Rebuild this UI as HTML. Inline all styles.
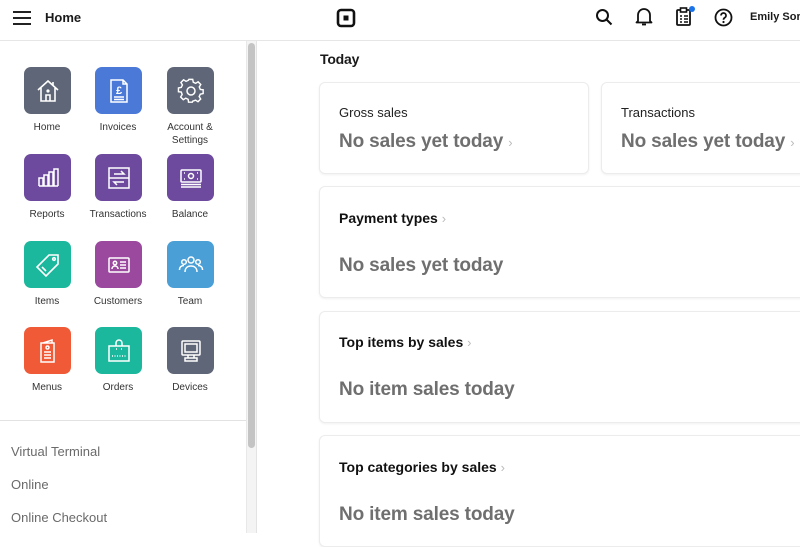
<!DOCTYPE html>
<html><head><meta charset="utf-8"><style>
*{margin:0;padding:0;box-sizing:border-box}
body{width:800px;height:533px;overflow:hidden;background:#fff;font-family:"Liberation Sans",sans-serif;position:relative;color:#1a1a1a}
.abs{position:absolute}
.hdr{left:0;top:0;width:800px;height:41px;border-bottom:1px solid #e6e6e6;background:#fff}
.tile{position:absolute;width:47px;height:47px;border-radius:7px;display:flex;align-items:center;justify-content:center}
.lbl{position:absolute;width:80px;text-align:center;font-size:10px;color:#333;line-height:13px}
.side{font-size:13px;color:#6a6a6a;left:11px}
.card{position:absolute;border:1px solid #ececec;border-radius:6px;box-shadow:0 1px 2px rgba(0,0,0,.06);background:#fff}
.big{position:absolute;font-size:19px;font-weight:bold;color:#6f6f6f;letter-spacing:-0.15px;white-space:nowrap}
.sm{position:absolute;font-size:13px;color:#222;white-space:nowrap}
.tt{position:absolute;font-size:14px;font-weight:bold;color:#111;letter-spacing:0;white-space:nowrap}
.ch{color:#bbb;font-weight:normal;font-size:13px}
svg{display:block}
</style></head><body>
<div class="abs hdr"></div>
<svg class="abs" style="left:12px;top:10px" width="20" height="16" viewBox="0 0 20 16"><path d="M1 2h18M1 8h18M1 14h18" stroke="#222" stroke-width="2"/></svg>
<div class="abs" style="left:45px;top:10px;font-size:13px;font-weight:bold">Home</div>
<svg class="abs" style="left:336px;top:8px" width="20" height="20" viewBox="0 0 20 20"><rect x="2" y="2" width="16" height="16" rx="3" fill="none" stroke="#111" stroke-width="2.6"/><rect x="7.5" y="7.5" width="5" height="5" fill="#111"/></svg>
<svg class="abs" style="left:595px;top:8px" width="18" height="18" viewBox="0 0 18 18"><circle cx="7.5" cy="7.5" r="5.5" fill="none" stroke="#111" stroke-width="2"/><path d="M11.5 11.5l5 5" stroke="#111" stroke-width="2"/></svg>
<svg class="abs" style="left:635px;top:7px" width="18" height="20" viewBox="0 0 18 20"><path d="M3 14V8a6 6 0 0112 0v6l1.5 1.5h-15z" fill="none" stroke="#111" stroke-width="1.8" stroke-linejoin="round"/><path d="M7 17.5h4" stroke="#111" stroke-width="1.8"/></svg>
<svg class="abs" style="left:675px;top:6px" width="20" height="22" viewBox="0 0 20 22"><rect x="2" y="4" width="13" height="15" rx="1" fill="none" stroke="#111" stroke-width="1.8"/><rect x="5.5" y="2" width="6" height="4" fill="#fff" stroke="#111" stroke-width="1.6"/><path d="M5 10h2M9 10h4M5 13h2M9 13h4M5 16h2M9 16h4" stroke="#111" stroke-width="1.4"/><circle cx="17" cy="3" r="3" fill="#1a73e8"/></svg>
<svg class="abs" style="left:714px;top:8px" width="19" height="19" viewBox="0 0 19 19"><circle cx="9.5" cy="9.5" r="8" fill="none" stroke="#111" stroke-width="1.8"/><path d="M7 7.5a2.5 2.5 0 114 2c-1 .6-1.5 1-1.5 2.2" fill="none" stroke="#111" stroke-width="1.7"/><circle cx="9.5" cy="14" r="1.1" fill="#111"/></svg>
<div class="abs" style="left:750px;top:11px;font-size:11px;font-weight:bold;white-space:nowrap">Emily Sorensen</div>

<div class="abs" style="left:246px;top:41px;width:11px;height:492px;background:#f4f4f4;border-left:1px solid #e8e8e8;border-right:1px solid #e3e3e3"></div>
<div class="abs" style="left:248px;top:43px;width:7px;height:405px;background:#c4c4c4;border-radius:4px"></div>
<div class="abs" style="left:0;top:420px;width:246px;height:1px;background:#e2e2e2"></div>

<div class="tile" style="left:24px;top:67px;background:#5e6677"><svg width="28" height="28" viewBox="0 0 28 28" fill="none" stroke="#fff" stroke-width="1.6"><path d="M4 13L14 4l10 9M7 11v13h14V11M12 24v-6h4v6M19 5v4"/><circle cx="14" cy="14" r=".8" fill="#fff"/></svg></div>
<div class="tile" style="left:95px;top:67px;background:#4a79d8"><svg width="28" height="28" viewBox="0 0 28 28" fill="none" stroke="#fff" stroke-width="1.5"><path d="M6 3h12l4 4v18H6z M18 3v4h4"/><text x="14" y="17" font-size="11" font-family="Liberation Sans" fill="#fff" stroke="none" text-anchor="middle" font-weight="bold">£</text><path d="M9 20h10M9 22.5h10"/></svg></div>
<div class="tile" style="left:167px;top:67px;background:#5e6677"><svg width="28" height="28" viewBox="0 0 28 28" fill="none" stroke="#fff" stroke-width="1.5"><circle cx="14" cy="14" r="4"/><path d="M12 3h4l.6 3 2.5 1.2 2.6-1.6 2.8 2.8-1.6 2.6L24 13.6l3 .4v4l-3 .6-1.2 2.5 1.6 2.6-2.8 2.8-2.6-1.6L16 26l-.4 1h-4l-.4-3-2.5-1.2-2.6 1.6-2.8-2.8 1.6-2.6L4 16.4 1 16v-4l3-.6 1.2-2.5-1.600-2.6 2.8-2.8 2.6 1.6L11.4 4z" transform="translate(0.5 -0.5) scale(.95)"/></svg></div>

<div class="tile" style="left:24px;top:154px;background:#6d4a9e"><svg width="28" height="28" viewBox="0 0 28 28" fill="none" stroke="#fff" stroke-width="1.5"><path d="M5 22V14h4v8M10 22V11h4v11M15 22V8h4v14M20 22V5h4v17M5 22h19"/></svg></div>
<div class="tile" style="left:95px;top:154px;background:#6d4a9e"><svg width="28" height="28" viewBox="0 0 28 28" fill="none" stroke="#fff" stroke-width="1.5"><rect x="4" y="4" width="20" height="20"/><path d="M4 14h20M9 10h10l-3-3M19 18H9l3 3"/></svg></div>
<div class="tile" style="left:167px;top:154px;background:#6d4a9e"><svg width="28" height="28" viewBox="0 0 28 28" fill="none" stroke="#fff" stroke-width="1.5"><rect x="4" y="6" width="20" height="12" rx="1"/><circle cx="14" cy="12" r="2.5"/><path d="M4 20.5h20M4 23h20M7 9h1M20 9h1M7 15h1M20 15h1"/></svg></div>

<div class="tile" style="left:24px;top:241px;background:#1bb89d"><svg width="28" height="28" viewBox="0 0 28 28" fill="none" stroke="#fff" stroke-width="1.6"><path d="M15 4h9v9L12 25 3 16z"/><circle cx="20" cy="8" r="1.3"/><path d="M8 16l4 4"/></svg></div>
<div class="tile" style="left:95px;top:241px;background:#9a499e"><svg width="28" height="28" viewBox="0 0 28 28" fill="none" stroke="#fff" stroke-width="1.5"><rect x="4" y="7" width="20" height="14" rx="1"/><circle cx="10" cy="12" r="1.7"/><path d="M7 18c0-2 1.5-3 3-3s3 1 3 3M15 11h6M15 14h6M15 17h6"/></svg></div>
<div class="tile" style="left:167px;top:241px;background:#4a9fd6"><svg width="28" height="28" viewBox="0 0 28 28" fill="none" stroke="#fff" stroke-width="1.5"><circle cx="14" cy="9" r="3"/><circle cx="7" cy="11" r="2.3"/><circle cx="21" cy="11" r="2.3"/><path d="M8 21c0-4 2.5-6 6-6s6 2 6 6M2.5 19c0-3 1.8-4.5 4.5-4.5M25.5 19c0-3-1.8-4.5-4.5-4.5"/></svg></div>

<div class="tile" style="left:24px;top:327px;background:#f05a37"><svg width="28" height="28" viewBox="0 0 28 28" fill="none" stroke="#fff" stroke-width="1.5"><path d="M7 6h13v19H7z M9 6l9-3v3"/><circle cx="13.5" cy="10.5" r="1.5"/><path d="M10 15h7M10 18h7M10 21h7"/></svg></div>
<div class="tile" style="left:95px;top:327px;background:#1bb89d"><svg width="28" height="28" viewBox="0 0 28 28" fill="none" stroke="#fff" stroke-width="1.5"><rect x="4" y="9" width="20" height="15"/><path d="M11 9V6a3 3 0 016 0v3" /><path d="M7 19h14" stroke-dasharray="1 1.5"/><path d="M11 12h1M16 12h1"/></svg></div>
<div class="tile" style="left:167px;top:327px;background:#5e6677"><svg width="28" height="28" viewBox="0 0 28 28" fill="none" stroke="#fff" stroke-width="1.5"><rect x="5" y="4" width="18" height="14" rx="1"/><rect x="8" y="7" width="12" height="8"/><path d="M11 18v3h6v-3M8 24h12v-3H8z"/></svg></div>

<div class="lbl" style="left:7px;top:121px">Home</div>
<div class="lbl" style="left:78px;top:121px">Invoices</div>
<div class="lbl" style="left:150px;top:121px">Account &amp;<br>Settings</div>
<div class="lbl" style="left:7px;top:208px">Reports</div>
<div class="lbl" style="left:78px;top:208px">Transactions</div>
<div class="lbl" style="left:150px;top:208px">Balance</div>
<div class="lbl" style="left:7px;top:295px">Items</div>
<div class="lbl" style="left:78px;top:295px">Customers</div>
<div class="lbl" style="left:150px;top:295px">Team</div>
<div class="lbl" style="left:7px;top:381px">Menus</div>
<div class="lbl" style="left:78px;top:381px">Orders</div>
<div class="lbl" style="left:150px;top:381px">Devices</div>

<div class="abs side" style="top:444px">Virtual Terminal</div>
<div class="abs side" style="top:477px">Online</div>
<div class="abs side" style="top:510px">Online Checkout</div>

<div class="abs" style="left:320px;top:51px;font-size:14px;font-weight:bold;letter-spacing:-0.2px">Today</div>

<div class="card" style="left:319px;top:82px;width:270px;height:92px"></div>
<div class="sm" style="left:339px;top:105px">Gross sales</div>
<div class="big" style="left:339px;top:131px">No sales yet today <span class="ch">›</span></div>

<div class="card" style="left:601px;top:82px;width:220px;height:92px"></div>
<div class="sm" style="left:621px;top:105px">Transactions</div>
<div class="big" style="left:621px;top:131px">No sales yet today <span class="ch">›</span></div>

<div class="card" style="left:319px;top:186px;width:500px;height:112px"></div>
<div class="tt" style="left:339px;top:210px">Payment types <span class="ch">›</span></div>
<div class="big" style="left:339px;top:255px">No sales yet today</div>

<div class="card" style="left:319px;top:311px;width:500px;height:112px"></div>
<div class="tt" style="left:339px;top:334px">Top items by sales <span class="ch">›</span></div>
<div class="big" style="left:339px;top:379px">No item sales today</div>

<div class="card" style="left:319px;top:435px;width:500px;height:112px"></div>
<div class="tt" style="left:339px;top:459px">Top categories by sales <span class="ch">›</span></div>
<div class="big" style="left:339px;top:504px">No item sales today</div>
</body></html>
